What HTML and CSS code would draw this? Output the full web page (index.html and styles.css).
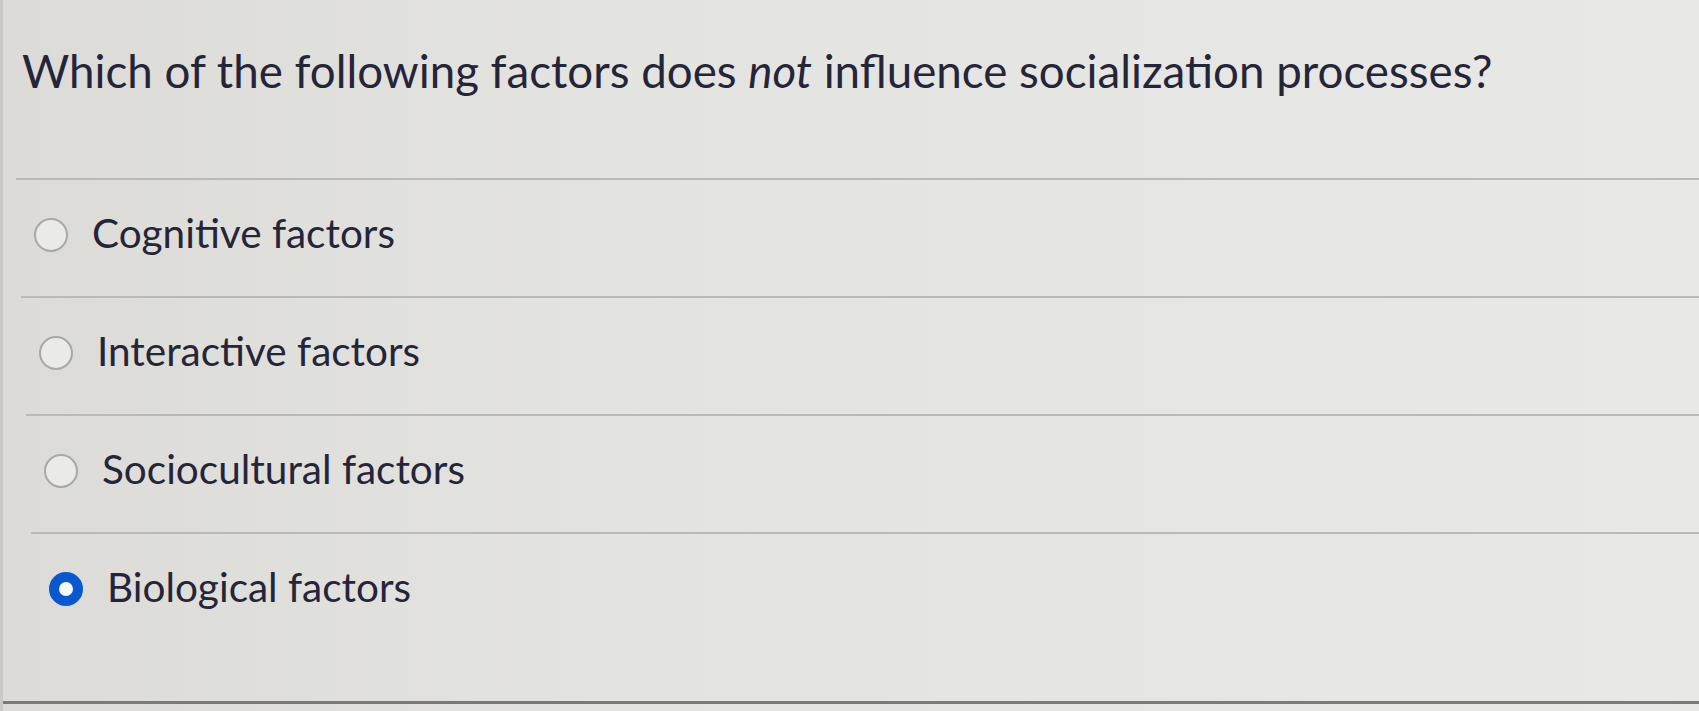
FILE: index.html
```html
<!DOCTYPE html>
<html lang="en">
<head>
<meta charset="utf-8">
<title>Question</title>
<link rel="stylesheet" href="styles.css">
</head>
<body>
<div class="screen">
  <h1 class="question">Which of the following factors does <em>not</em> influence socialization processes?</h1>
  <ul class="options">
    <li class="option"><span class="radio"></span><span class="label">Cognitive factors</span></li>
    <li class="option"><span class="radio"></span><span class="label">Interactive factors</span></li>
    <li class="option"><span class="radio"></span><span class="label">Sociocultural factors</span></li>
    <li class="option"><span class="radio radio-checked"></span><span class="label">Biological factors</span></li>
  </ul>
  <div class="footer-line"></div>
</div>
</body>
</html>
```
FILE: styles.css
```css
html, body {
  margin: 0;
  padding: 0;
  height: 100%;
}
body {
  background: linear-gradient(90deg, #dcdbd7 0%, #e3e3e0 35%, #e8e8e6 100%);
  font-family: Lato, "Noto Sans", sans-serif;
  color: #25253a;
  overflow: hidden;
}
.screen {
  height: 711px;
  display: flex;
  flex-direction: column;
  border-left: 3px solid #c9c8c4;
  box-sizing: border-box;
}
.question {
  margin: 0;
  padding: 43px 0 0 19px;
  font-size: 45.7px;
  font-weight: 400;
  line-height: 56px;
  height: 178px;
  box-sizing: border-box;
}
.question em {
  font-style: italic;
}
.options {
  list-style: none;
  margin: 0;
  padding: 0;
}
.option {
  display: flex;
  align-items: center;
  height: 118px;
  box-sizing: border-box;
  border-top: 2px solid #b9b9b6;
  padding-bottom: 6px;
  padding-left: 18px;
  gap: 24px;
  font-size: 40.5px;
}
.option:nth-child(1) { margin-left: 13px; }
.option:nth-child(2) { margin-left: 18px; }
.option:nth-child(3) { margin-left: 23px; }
.option:nth-child(4) { margin-left: 28px; }
.radio {
  flex: none;
  width: 34px;
  height: 34px;
  box-sizing: border-box;
  border-radius: 50%;
  border: 2px solid #a8a8a6;
  background: #eaeae7;
}
.radio-checked {
  border: 10px solid #0a58d0;
  background: #fafafa;
}
.label {
  line-height: 50px;
  padding-bottom: 4px;
}
.footer-line {
  margin-top: auto;
  margin-bottom: 7px;
  height: 3px;
  background: #7a7a78;
}
```
